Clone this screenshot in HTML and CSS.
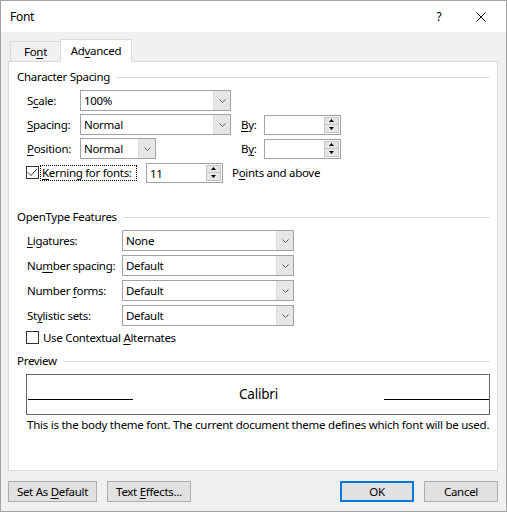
FILE: index.html
```html
<!DOCTYPE html>
<html>
<head>
<meta charset="utf-8">
<title>Font</title>
<link rel="stylesheet" href="styles.css">
</head>
<body>
<div class="window">
  <div class="titlebar">
    <span class="title">Font</span>
    <span class="help">?</span>
    <svg class="close" width="10" height="10" viewBox="0 0 10 10"><path d="M0.5 0.5 L9.5 9.5 M9.5 0.5 L0.5 9.5" stroke="#000" stroke-width="1" fill="none"/></svg>
  </div>
  <div class="content">
    <div class="tabs">
      <div class="tab"><span>Fo<u>n</u>t</span></div>
      <div class="tab active"><span>Ad<u>v</u>anced</span></div>
    </div>
    <div class="panel">
      <div class="section-head"><span>Character Spacing</span><span class="rule"></span></div>
      <div class="group cs">
        <div class="row">
          <span class="lbl lbl-cs">S<u>c</u>ale:</span>
          <div class="combo w151"><span class="val">100%</span><span class="cb-btn"><svg width="7" height="4" viewBox="0 0 7 4"><polyline points="0.5,0.5 3.5,3.5 6.5,0.5" fill="none" stroke="#606060"/></svg></span></div>
        </div>
        <div class="row">
          <span class="lbl lbl-cs"><u>S</u>pacing:</span>
          <div class="combo w151"><span class="val">Normal</span><span class="cb-btn"><svg width="7" height="4" viewBox="0 0 7 4"><polyline points="0.5,0.5 3.5,3.5 6.5,0.5" fill="none" stroke="#606060"/></svg></span></div>
          <span class="by"><u>B</u>y:</span>
          <div class="spin w77"><span class="val"></span><span class="sp-btns"><span class="sb"><svg width="5" height="3" viewBox="0 0 5 3"><polygon points="0,3 2.5,0 5,3" fill="#000"/></svg></span><span class="sb"><svg width="5" height="3" viewBox="0 0 5 3"><polygon points="0,0 5,0 2.5,3" fill="#000"/></svg></span></span></div>
        </div>
        <div class="row">
          <span class="lbl lbl-cs"><u>P</u>osition:</span>
          <div class="combo w76"><span class="val">Normal</span><span class="cb-btn"><svg width="7" height="4" viewBox="0 0 7 4"><polyline points="0.5,0.5 3.5,3.5 6.5,0.5" fill="none" stroke="#606060"/></svg></span></div>
          <span class="by by-far">B<u>y</u>:</span>
          <div class="spin w77"><span class="val"></span><span class="sp-btns"><span class="sb"><svg width="5" height="3" viewBox="0 0 5 3"><polygon points="0,3 2.5,0 5,3" fill="#000"/></svg></span><span class="sb"><svg width="5" height="3" viewBox="0 0 5 3"><polygon points="0,0 5,0 2.5,3" fill="#000"/></svg></span></span></div>
        </div>
        <div class="row kern">
          <span class="check"><svg width="11" height="11" viewBox="0 0 11 11"><polyline points="1,5.5 4,8.5 10,2" fill="none" stroke="#333" stroke-width="1"/></svg></span>
          <span class="focus"><u>K</u>erning for fonts:</span>
          <div class="spin w77 kspin"><span class="val">11</span><span class="sp-btns"><span class="sb"><svg width="5" height="3" viewBox="0 0 5 3"><polygon points="0,3 2.5,0 5,3" fill="#000"/></svg></span><span class="sb"><svg width="5" height="3" viewBox="0 0 5 3"><polygon points="0,0 5,0 2.5,3" fill="#000"/></svg></span></span></div>
          <span class="pts">P<u>o</u>ints and above</span>
        </div>
      </div>

      <div class="section-head sh2"><span>OpenType Features</span><span class="rule"></span></div>
      <div class="group ot">
        <div class="row orow">
          <span class="lbl lbl-ot"><u>L</u>igatures:</span>
          <div class="combo w172"><span class="val">None</span><span class="cb-btn"><svg width="7" height="4" viewBox="0 0 7 4"><polyline points="0.5,0.5 3.5,3.5 6.5,0.5" fill="none" stroke="#606060"/></svg></span></div>
        </div>
        <div class="row orow">
          <span class="lbl lbl-ot">Nu<u>m</u>ber spacing:</span>
          <div class="combo w172"><span class="val">Default</span><span class="cb-btn"><svg width="7" height="4" viewBox="0 0 7 4"><polyline points="0.5,0.5 3.5,3.5 6.5,0.5" fill="none" stroke="#606060"/></svg></span></div>
        </div>
        <div class="row orow">
          <span class="lbl lbl-ot">Number <u>f</u>orms:</span>
          <div class="combo w172"><span class="val">Default</span><span class="cb-btn"><svg width="7" height="4" viewBox="0 0 7 4"><polyline points="0.5,0.5 3.5,3.5 6.5,0.5" fill="none" stroke="#606060"/></svg></span></div>
        </div>
        <div class="row orow">
          <span class="lbl lbl-ot">St<u>y</u>listic sets:</span>
          <div class="combo w172"><span class="val">Default</span><span class="cb-btn"><svg width="7" height="4" viewBox="0 0 7 4"><polyline points="0.5,0.5 3.5,3.5 6.5,0.5" fill="none" stroke="#606060"/></svg></span></div>
        </div>
        <div class="row crow">
          <span class="check"></span>
          <span class="ctext">Use Contextual <u>A</u>lternates</span>
        </div>
      </div>

      <div class="section-head sh3"><span>Preview</span><span class="rule"></span></div>
      <div class="preview">
        <span class="pline pl-left"></span>
        <span class="ptext">Calibri</span>
        <span class="pline pl-right"></span>
      </div>
      <div class="desc">This is the body theme font. The current document theme defines which font will be used.</div>
    </div>
    <div class="buttons">
      <span class="btn b-default"><span>Set As <u>D</u>efault</span></span>
      <span class="btn b-effects"><span>Text <u>E</u>ffects...</span></span>
      <span class="spacer"></span>
      <span class="btn b-ok"><span>OK</span></span>
      <span class="btn b-cancel"><span>Cancel</span></span>
    </div>
  </div>
</div>
</body>
</html>
```

FILE: styles.css
```css
* { box-sizing: border-box; }
html, body { margin: 0; padding: 0; }
body {
  width: 507px;
  height: 512px;
  overflow: hidden;
  font-family: "Noto Sans", "Open Sans", sans-serif;
  font-size: 11.5px;
  letter-spacing: -0.3px;
  color: #000;
  background: #f0f0f0;
}
u { text-decoration-thickness: 1px; text-underline-offset: 2px; }

.window {
  width: 507px;
  height: 512px;
  border: 1px solid #a3a3a3;
  background: #f0f0f0;
  display: flex;
  flex-direction: column;
}

.titlebar {
  flex: none;
  height: 31px;
  background: #fff;
  display: flex;
  align-items: center;
  padding-left: 9px;
  padding-right: 20px;
}
.title { flex: 1; font-size: 12px; }
.help { width: 10px; text-align: center; font-size: 12px; }
.close { margin-left: 32px; display: block; }

.content {
  flex: 1;
  padding: 0 8px 0 7px;
  display: flex;
  flex-direction: column;
}

.tabs {
  display: flex;
  align-items: flex-end;
  margin-top: 7px;
  padding-left: 2px;
}
.tab {
  height: 20px;
  border: 1px solid #d9d9d9;
  border-bottom: none;
  background: #f0f0f0;
  display: flex;
  align-items: center;
  justify-content: center;
  width: 51px;
  padding-bottom: 1px;
}
.tab.active {
  width: 72px;
  height: 23px;
  margin-left: -1px;
  margin-bottom: -1px;
  background: #fff;
  position: relative;
  z-index: 1;
  padding-bottom: 1px;
}

.panel {
  height: 410px;
  border: 1px solid #d9d9d9;
  background: #fff;
  padding: 7px 7px 0 8px;
  display: flex;
  flex-direction: column;
}

.section-head {
  height: 16px;
  line-height: 16px;
  display: flex;
  align-items: center;
  white-space: nowrap;
}
.section-head .rule {
  flex: 1;
  height: 1px;
  background: #dcdcdc;
  margin-left: 6px;
}
.sh2 { margin-top: 26px; }
.sh3 { margin-top: 8px; }

.group { padding-left: 10px; margin-top: 2px; }
.row {
  display: flex;
  align-items: center;
  height: 21px;
  margin-top: 3px;
  white-space: nowrap;
}
.lbl-cs { width: 53px; }
.lbl-ot { width: 95px; }

.combo {
  height: 21px;
  border: 1px solid #a2a2a2;
  background: #fff;
  display: flex;
  align-items: stretch;
}
.combo .val, .spin .val {
  flex: 1;
  padding-left: 3px;
  line-height: 19px;
}
.cb-btn {
  width: 17px;
  background: #e6e6e6;
  border-left: 1px solid #dadada;
  display: flex;
  align-items: center;
  justify-content: center;
}
.cb-btn svg { display: block; }
.w151 { width: 151px; }
.w76 { width: 76px; }
.w172 { width: 172px; }
.w77 { width: 77px; }

.by { margin-left: 10px; width: 23px; }
.by-far { margin-left: 85px; }

.spin {
  height: 20px;
  border: 1px solid #a2a2a2;
  background: #fff;
  display: flex;
  align-items: stretch;
}
.sp-btns {
  width: 16px;
  display: flex;
  flex-direction: column;
  padding: 1px 1px 1px 0;
}
.sb {
  flex: 1;
  background: #e6e6e6;
  border: 1px solid #c4c4c4;
  display: flex;
  align-items: center;
  justify-content: center;
}
.sb + .sb { border-top: none; }
.sb svg { display: block; }

.kern { margin-top: 3px; }
.check {
  width: 13px;
  height: 13px;
  border: 1px solid #333;
  background: #fff;
  margin-left: -1px;
  display: flex;
  align-items: center;
  justify-content: center;
  flex: none;
}
.check svg { display: block; }
.focus {
  margin-left: 1px;
  width: 97px;
  height: 16px;
  line-height: 14px;
  border: 1px dotted #000;
  padding-left: 1px;
}
.kspin { margin-left: 9px; }
.pts { margin-left: 9px; }

.ot { margin-top: 2px; }
.orow { margin-top: 4px; }
.ot .orow:first-child { margin-top: 3px; }
.crow { height: 15px; margin-top: 4px; }
.ctext { margin-left: 4px; }

.preview {
  margin-top: 5px;
  margin-left: 9px;
  width: 464px;
  height: 41px;
  border: 1px solid #646464;
  display: flex;
  align-items: flex-start;
  flex: none;
}
.pline {
  width: 105px;
  height: 1px;
  background: #000;
  margin-top: 24px;
}
.pl-left { margin-left: 1px; }
.ptext {
  flex: 1;
  text-align: center;
  font-size: 13.5px;
  letter-spacing: -0.2px;
  line-height: 18px;
  margin-top: 10px;
}
.desc {
  margin-top: 2px;
  padding-left: 10px;
  line-height: 16px;
  letter-spacing: -0.25px;
  white-space: nowrap;
}

.buttons {
  display: flex;
  margin-top: 10px;
  height: 21px;
}
.btn {
  height: 21px;
  background: #e1e1e1;
  border: 1px solid #adadad;
  display: flex;
  align-items: center;
  justify-content: center;
  white-space: nowrap;
}
.b-default { width: 89px; }
.b-effects { width: 84px; margin-left: 10px; }
.spacer { flex: 1; }
.b-ok { width: 74px; border: 2px solid #0078d7; margin-right: 10px; }
.b-cancel { width: 74px; }
```
